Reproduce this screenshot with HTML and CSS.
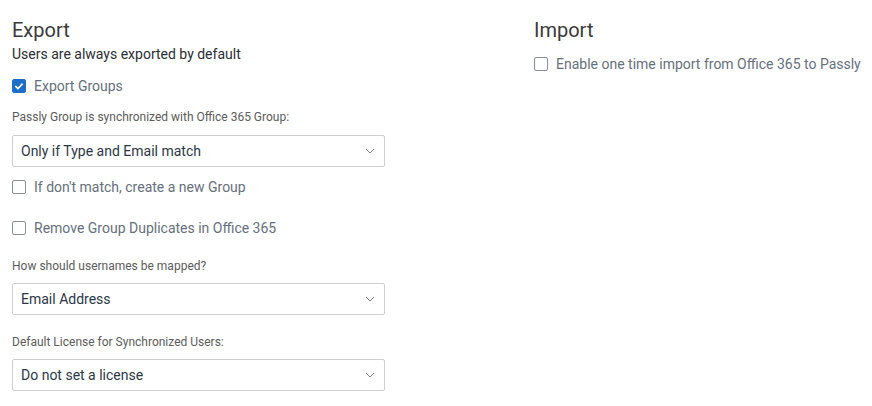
FILE: index.html
```html
<!DOCTYPE html>
<html lang="en">
<head>
    <meta charset="UTF-8">
    <title>Office 365 Sync</title>
    <link rel="stylesheet" href="styles.css">
</head>
<body>
    <main class="sync">

        <section class="col">
            <h2 class="title">Export</h2>
            <p class="note">Users are always exported by default</p>

            <label class="check row-groups">
                <span class="box checked">
                    <svg viewBox="0 0 14 14" width="14" height="14"><path d="M3.3 7 L5.9 9.5 L10.6 4.6" fill="none" stroke="#fff" stroke-width="1.7"/></svg>
                </span>
                Export Groups
            </label>

            <p class="label lbl-sync">Passly Group is synchronized with Office 365 Group:</p>
            <div class="select">
                <span>Only if Type and Email match</span>
                <svg viewBox="0 0 10 6" width="10" height="6"><path d="M1 1 L5 5 L9 1" fill="none" stroke="#7a7f86" stroke-width="1"/></svg>
            </div>

            <label class="check row-new">
                <span class="box"></span>
                If don't match, create a new Group
            </label>

            <label class="check row-dup">
                <span class="box"></span>
                Remove Group Duplicates in Office 365
            </label>

            <p class="label lbl-map">How should usernames be mapped?</p>
            <div class="select">
                <span>Email Address</span>
                <svg viewBox="0 0 10 6" width="10" height="6"><path d="M1 1 L5 5 L9 1" fill="none" stroke="#7a7f86" stroke-width="1"/></svg>
            </div>

            <p class="label lbl-lic">Default License for Synchronized Users:</p>
            <div class="select">
                <span>Do not set a license</span>
                <svg viewBox="0 0 10 6" width="10" height="6"><path d="M1 1 L5 5 L9 1" fill="none" stroke="#7a7f86" stroke-width="1"/></svg>
            </div>
        </section>

        <section class="col">
            <h2 class="title">Import</h2>
            <label class="check row-import">
                <span class="box"></span>
                Enable one time import from Office 365 to Passly
            </label>
        </section>

    </main>
</body>
</html>
```

FILE: styles.css
```css
*{ padding:0; margin:0; box-sizing:border-box; }

:root{
    --text: #2a2e33;
    --title: #3a3a3a;
    --muted: #66707c;
    --label: #5c5c5c;
    --border: #cfcfcf;
    --blue: #1c6fc9;
}

body{
    font-family: Roboto, "Liberation Sans", sans-serif;
    background: #fff;
    color: var(--text);
}

/*   LAYOUT   */

.sync{
    display: grid;
    grid-template-columns: 373px 1fr;
    column-gap: 149px;
    padding: 18px 0 0 12px;
}
.col{
    display: flex;
    flex-direction: column;
    align-items: flex-start;
}

/*   TEXT   */

.title{
    font-size: 20px;
    line-height: 24px;
    font-weight: 400;
    color: var(--title);
}
.note{
    margin-top: 2px;
    font-size: 14px;
    line-height: 20px;
}
.label{
    font-size: 12px;
    line-height: 16px;
    color: var(--label);
}

/*   CHECKBOXES   */

.check{
    display: flex;
    align-items: center;
    gap: 8px;
    font-size: 14px;
    line-height: 20px;
    color: var(--muted);
    white-space: nowrap;
}
.box{
    width: 14px;
    height: 14px;
    border: 1px solid #8a8f96;
    border-radius: 2px;
    background: #fff;
    display: flex;
    flex-shrink: 0;
}
.box.checked{
    border-color: var(--blue);
    background: var(--blue);
}
.box.checked svg{ margin: -1px; }

/*   SELECT   */

.select{
    width: 373px;
    height: 32px;
    border: 1px solid var(--border);
    border-radius: 2px;
    display: flex;
    align-items: center;
    justify-content: space-between;
    padding: 0 9px 0 8px;
    font-size: 14px;
    color: #2b3846;
}

/*   SPACING   */

.row-groups{ margin-top: 12px; }
.lbl-sync{ margin-top: 13px; }
.lbl-sync + .select{ margin-top: 10px; }
.row-new{ margin-top: 10px; }
.row-dup{ margin-top: 21px; }
.lbl-map{ margin-top: 20px; }
.lbl-map + .select{ margin-top: 9px; }
.lbl-lic{ margin-top: 19px; }
.lbl-lic + .select{ margin-top: 9px; }
.row-import{ margin-top: 12px; }
```
